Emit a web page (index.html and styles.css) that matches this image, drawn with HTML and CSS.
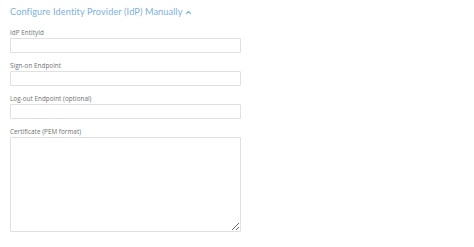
FILE: index.html
```html
<!DOCTYPE html>
<html>
<head>
<meta charset="utf-8">
<link rel="stylesheet" href="styles.css">
</head>
<body>
<div class="panel">
  <h2 class="title">Configure Identity Provider (IdP) Manually <svg class="chev" viewBox="0 0 10 10" width="7" height="7"><path d="M2 6.5 L5 3.5 L8 6.5" fill="none" stroke="currentColor" stroke-width="1.6" stroke-linecap="round" stroke-linejoin="round"/></svg></h2>
  <div class="field">
    <label class="label">IdP EntityId</label>
    <input class="input" type="text">
  </div>
  <div class="field">
    <label class="label">Sign-on Endpoint</label>
    <input class="input" type="text">
  </div>
  <div class="field">
    <label class="label">Log-out Endpoint (optional)</label>
    <input class="input" type="text">
  </div>
  <div class="field">
    <label class="label">Certificate (PEM format)</label>
    <textarea class="textarea"></textarea>
  </div>
</div>
</body>
</html>
```
FILE: styles.css
```css
html, body {
  margin: 0;
  padding: 0;
  background: #ffffff;
}
.panel {
  padding: 5px 0 0 10px;
  width: 231px;
  font-family: "Lato", "Noto Sans", sans-serif;
}
.title {
  margin: 0 0 9px 0;
  font-size: 9.2px;
  font-weight: 400;
  letter-spacing: 0.1px;
  color: #7eb0db;
  line-height: 14px;
  white-space: nowrap;
  display: flex;
  align-items: center;
  gap: 2px;
}
.chev {
  display: block;
}
.field {
  display: flex;
  flex-direction: column;
  gap: 1px;
  margin-bottom: 8px;
}
.label {
  font-family: "Open Sans", "Noto Sans", sans-serif;
  font-size: 6.3px;
  line-height: 9px;
  color: #707070;
  letter-spacing: 0.05px;
}
.input {
  box-sizing: border-box;
  height: 15px;
  width: 231px;
  margin: 0;
  border: 1px solid #e0e0e0;
  border-radius: 1px;
  background: #fff;
  padding: 0;
}
.textarea {
  box-sizing: border-box;
  width: 231px;
  height: 95px;
  margin: 0;
  border: 1px solid #e0e0e0;
  border-radius: 1px;
  background: #fff;
  padding: 0;
  resize: both;
}
```
